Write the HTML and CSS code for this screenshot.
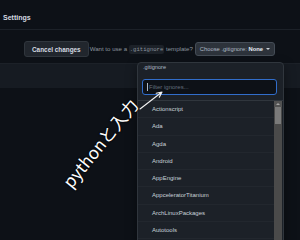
FILE: index.html
```html
<!DOCTYPE html>
<html lang="ja">
<head>
    <meta charset="UTF-8">
    <meta name="viewport" content="width=device-width, initial-scale=1.0">
    <title>Settings</title>
    <link rel="stylesheet" href="styles.css">
</head>
<body>
    <div class="page">
        <div class="topbar">
            <span class="title">Settings</span>
        </div>

        <div class="toolbar">
            <button class="btn">Cancel changes</button>
            <span class="hint">Want to use a <code>.gitignore</code> template?</span>
            <button class="btn btn-select">Choose .gitignore: <strong>None</strong> <span class="caret"></span></button>
        </div>

        <div class="editor-bar"></div>

        <!-- template picker popover -->
        <div class="dropdown">
            <div class="dd-header">.gitignore</div>
            <div class="dd-filter">
                <div class="dd-input"><span class="cursor"></span>Filter ignores...</div>
            </div>
            <div class="dd-list">
                <ul class="dd-items">
                    <li>Actionscript</li>
                    <li>Ada</li>
                    <li>Agda</li>
                    <li>Android</li>
                    <li>AppEngine</li>
                    <li>AppceleratorTitanium</li>
                    <li>ArchLinuxPackages</li>
                    <li>Autotools</li>
                    <li></li>
                </ul>
                <div class="scrollbar">
                    <div class="sb-arrow"></div>
                    <div class="sb-thumb"></div>
                    <div class="sb-track"></div>
                </div>
            </div>
        </div>

        <!-- handwritten note -->
        <span class="note-text">pythonと入力</span>
        <svg class="note-arrow" width="30" height="28" viewBox="0 0 30 28">
            <path d="M4 23 L26 6 M20.2 7.3 L26 6 L23.3 11.3" fill="none" stroke="#f2f2f2" stroke-width="1.1" stroke-linecap="round" stroke-linejoin="round"/>
        </svg>
    </div>
</body>
</html>
```

FILE: styles.css
```css
* {
    margin: 0;
    padding: 0;
    box-sizing: border-box;
}

body {
    background-color: #0d1117;
    font-family: 'Liberation Sans', Arial, sans-serif;
    color: #c9d1d9;
}

.page {
    position: relative;
    width: 300px;
    height: 240px;
    overflow: hidden;
}

.topbar {
    height: 30px;
    display: flex;
    align-items: center;
    padding: 6px 0 0 3px;
    border-bottom: 1px solid #1c2128;
}

.title {
    font-size: 7px;
    font-weight: bold;
    color: #d5dbe1;
}

.toolbar {
    display: flex;
    align-items: center;
    padding: 11px 0 0 24px;
    height: 27px;
}

.btn {
    height: 16px;
    padding: 0 7px;
    background-color: #21262d;
    border: 1px solid #30363d;
    border-radius: 3px;
    color: #d5dbe1;
    font-family: inherit;
    font-size: 6.4px;
    font-weight: bold;
}

.hint {
    margin-left: 1px;
    font-size: 6.1px;
    color: #8b949e;
}

.hint code {
    font-family: 'Liberation Mono', monospace;
    font-size: 5.6px;
    padding: 1px 1px;
    background-color: #1c2128;
    border-radius: 2px;
}

.btn-select {
    margin-left: 2px;
    height: 14px;
    padding: 0 4px;
    background-color: #2d333b;
    border-color: #444c56;
    font-weight: normal;
    font-size: 5.8px;
    color: #adbac7;
}

.btn-select strong {
    color: #e6edf3;
}

.caret {
    display: inline-block;
    margin-left: 1px;
    border-left: 2px solid transparent;
    border-right: 2px solid transparent;
    border-top: 2px solid #c9d1d9;
    vertical-align: middle;
}

.editor-bar {
    margin-top: 6px;
    height: 25px;
    background-color: #161b22;
    border-top: 1px solid #1c2128;
}

.dropdown {
    position: absolute;
    left: 137px;
    top: 62px;
    width: 147px;
    bottom: -10px;
    background-color: #1c2128;
    border: 1px solid #30363d;
    border-radius: 4px 4px 0 0;
    box-shadow: 0 4px 12px rgba(0,0,0,0.4);
}

.dd-header {
    height: 10px;
    padding-left: 5px;
    font-size: 5.6px;
    line-height: 8px;
    color: #adbac7;
}

.dd-filter {
    padding: 6px 6px 5px 4px;
    border-bottom: 1px solid #30363d;
}

.dd-input {
    display: flex;
    align-items: center;
    height: 16px;
    padding-left: 4px;
    background-color: #0d1117;
    border: 1px solid #316dca;
    border-radius: 3px;
    font-size: 6px;
    color: #636e7b;
}

.cursor {
    width: 1px;
    height: 8px;
    margin-right: 1px;
    background-color: #adbac7;
}

.dd-list {
    display: flex;
}

.dd-items {
    flex: 1;
    list-style: none;
}

.dd-items li {
    height: 17.3px;
    padding-left: 14px;
    border-bottom: 1px solid #22272e;
    font-size: 6px;
    line-height: 16px;
    color: #c9d1d9;
}

.scrollbar {
    width: 8px;
    margin-right: 1px;
    display: flex;
    flex-direction: column;
    background-color: #4a4a4a;
}

.sb-arrow {
    height: 6px;
    background-color: #525252;
    position: relative;
}

.sb-arrow::after {
    content: '';
    position: absolute;
    left: 2px;
    top: 2px;
    border-left: 2px solid transparent;
    border-right: 2px solid transparent;
    border-bottom: 2px solid #a3a3a3;
}

.sb-thumb {
    height: 17px;
    margin: 0 1px;
    background-color: #7a7a7a;
}

.sb-track {
    flex: 1;
}

.note-text {
    position: absolute;
    left: 44px;
    top: 131px;
    width: 112px;
    text-align: center;
    white-space: nowrap;
    font-family: 'Noto Sans CJK JP', sans-serif;
    font-size: 17px;
    line-height: 24px;
    color: #ffffff;
    text-shadow: 0 0 1px #000, 0 0 2px #000;
    transform: rotate(-51deg);
}

.note-arrow {
    position: absolute;
    left: 136px;
    top: 86px;
}
```
